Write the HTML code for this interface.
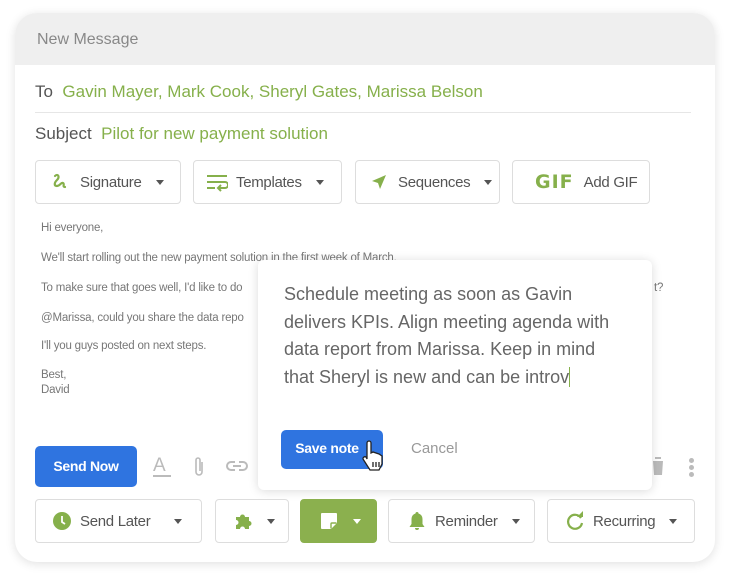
<!DOCTYPE html>
<html><head><meta charset="utf-8"><style>
*{margin:0;padding:0;box-sizing:border-box}
body{width:730px;height:578px;background:#fff;font-family:"Liberation Sans",sans-serif;position:relative;overflow:hidden}
.card{position:absolute;left:15px;top:13px;width:700px;height:549px;background:#fff;border-radius:22px;box-shadow:0 2px 10px rgba(0,0,0,.12);overflow:hidden}
.hdr{position:absolute;left:0;top:0;width:700px;height:52px;background:#efefef}
.a{position:absolute;white-space:nowrap}
.g{color:#86b04b}
.btn{position:absolute;border:1px solid #ddd;border-radius:4px;background:#fff;height:44px;display:flex;align-items:center;font-size:15px;color:#555;letter-spacing:-0.3px}
.car{display:inline-block;width:0;height:0;border-left:4.5px solid transparent;border-right:4.5px solid transparent;border-top:5px solid #555;margin-left:14px}
.body{font-size:11.5px;color:#777;letter-spacing:-0.2px}
.pop{position:absolute;left:258px;top:260px;width:394px;height:230px;background:#fff;border-radius:6px;box-shadow:0 1px 10px rgba(0,0,0,.15)}
</style></head><body>
<div class="card">
<div class="hdr"></div>
<div class="a" style="left:22px;top:18px;font-size:16px;color:#888">New Message</div>
<div class="a" style="left:20px;top:69px;font-size:17px;color:#555">To <span class="g">&nbsp;Gavin Mayer, Mark Cook, Sheryl Gates, Marissa Belson</span></div>
<div class="a" style="left:20px;top:99px;width:656px;height:1px;background:#e6e6e6"></div>
<div class="a" style="left:20px;top:111px;font-size:17px;color:#555">Subject <span class="g">&nbsp;Pilot for new payment solution</span></div>
</div>
<div class="btn" style="left:35px;top:160px;width:146px;padding-left:15px"><svg width="20" height="20" viewBox="0 0 20 20"><path d="M4 4c3-3 5 1 2 4s-3 6 0 6 4-4 6-3-1 4 2 4" fill="none" stroke="#86b04b" stroke-width="2.2" stroke-linecap="round"/></svg><span style="margin-left:9px">Signature</span><span class="car"></span></div>
<div class="btn" style="left:193px;top:160px;width:149px;padding-left:12px"><svg width="22" height="20" viewBox="0 0 22 20"><path d="M1 4h20M1 10h18a3 3 0 0 1 0 6h-6M1 16h8M15 13l-3 3 3 3" fill="none" stroke="#86b04b" stroke-width="2"/></svg><span style="margin-left:8px">Templates</span><span class="car"></span></div>
<div class="btn" style="left:355px;top:160px;width:145px;padding-left:14px"><svg width="18" height="18" viewBox="0 0 18 18"><path d="M16 2L2 8l6 2 2 6z" fill="#86b04b"/></svg><span style="margin-left:10px">Sequences</span><span class="car"></span></div>
<div class="btn" style="left:512px;top:160px;width:138px;padding-left:22px"><b style="color:#86b04b;font-size:19px;font-family:'DejaVu Sans',sans-serif;letter-spacing:1px">GIF</b><span style="margin-left:10px">Add GIF</span></div>
<div class="a body" style="left:41px;top:222px">Hi everyone,</div>
<div class="a body" style="left:41px;top:252px">We'll start rolling out the new payment solution in the first week of March.</div>
<div class="a body" style="left:41px;top:282px">To make sure that goes well, I'd like to do</div>
<div class="a body" style="left:654px;top:282px">t?</div>
<div class="a body" style="left:41px;top:312px">@Marissa, could you share the data repo</div>
<div class="a body" style="left:41px;top:340px">I'll you guys posted on next steps.</div>
<div class="a body" style="left:41px;top:368px;line-height:15px">Best,<br>David</div>
<div class="a" style="left:35px;top:446px;width:102px;height:41px;background:#2f74e0;border-radius:5px;color:#fff;font-size:14px;font-weight:bold;text-align:center;line-height:41px;letter-spacing:-0.3px">Send Now</div>
<div class="a" style="left:153px;top:455px;color:#bbb;font-size:19px">A</div>
<div class="a" style="left:153px;top:475px;width:18px;height:2px;background:#bbb"></div>
<svg class="a" style="left:192px;top:456px" width="14" height="22" viewBox="0 0 14 22"><path d="M10 6v10a3 3 0 0 1-6 0V4a2 2 0 0 1 4 0v11" fill="none" stroke="#bbb" stroke-width="1.6"/></svg>
<svg class="a" style="left:226px;top:459px" width="22" height="14" viewBox="0 0 22 14"><path d="M9 3H5a4 4 0 0 0 0 8h4M13 3h4a4 4 0 0 1 0 8h-4M7 7h8" fill="none" stroke="#bbb" stroke-width="2"/></svg>
<svg class="a" style="left:650px;top:456px" width="16" height="20" viewBox="0 0 16 20"><path d="M1 3h14M5 3V1h6v2M3 5h10l-1 14H4z" fill="#bbb"/></svg>
<div class="a" style="left:689px;top:458px;width:5px;height:5px;border-radius:3px;background:#bbb;box-shadow:0 7px 0 #bbb,0 14px 0 #bbb"></div>
<div class="pop">
<div class="a" style="left:26px;top:21px;font-size:18px;line-height:27.5px;color:#666;white-space:normal;width:338px">Schedule meeting as soon as Gavin delivers KPIs. Align meeting agenda with data report from Marissa. Keep in mind that Sheryl is new and can be introv<span style="border-left:1px solid #86b04b"></span></div>
<div class="a" style="left:23px;top:170px;width:102px;height:39px;background:#2f74e0;border-radius:5px;color:#fff;font-size:14px;font-weight:bold;text-align:center;line-height:37px;padding-right:10px;letter-spacing:-0.3px">Save note</div>
<div class="a" style="left:153px;top:180px;font-size:15px;color:#999">Cancel</div>
<svg class="a" style="left:103px;top:180px" width="26" height="32" viewBox="0 0 26 32"><path d="M6 3a2 2 0 0 1 4 0v10l2-1 3 1 3 1 3 2v8l-3 6H9L2 19a2 2 0 0 1 3-2l1 2z" fill="#fff" stroke="#222" stroke-width="1.3"/><path d="M12 22v5M15 22v5M18 22v5" stroke="#222" stroke-width="1.3"/></svg>
</div>
<div class="btn" style="left:35px;top:499px;width:167px;padding-left:17px"><svg width="18" height="18" viewBox="0 0 18 18"><circle cx="9" cy="9" r="9" fill="#86b04b"/><path d="M9 4v6l3 2" stroke="#fff" stroke-width="1.8" fill="none"/></svg><span style="margin-left:9px">Send Later</span><span class="car" style="margin-left:24px"></span></div>
<div class="btn" style="left:215px;top:499px;width:74px;padding-left:17px"><svg width="20" height="20" viewBox="0 0 20 20"><path d="M3 6h4a2.5 2.5 0 1 1 5 0h4v4a2.5 2.5 0 1 1 0 5v3h-4a2.5 2.5 0 1 0-5 0H3v-4a2.5 2.5 0 1 0 0-5z" fill="#86b04b"/></svg><span class="car"></span></div>
<div class="btn" style="left:300px;top:499px;width:77px;padding-left:19px;background:#8bb04e;border-color:#8bb04e"><svg width="18" height="18" viewBox="0 0 18 18"><path d="M2 1h14a1 1 0 0 1 1 1v9l-6 6H2a1 1 0 0 1-1-1V2a1 1 0 0 1 1-1z" fill="#fff"/><path d="M11 16.5V12a1 1 0 0 1 1-1h4.5" fill="none" stroke="#8bb04e" stroke-width="1.4"/></svg><span class="car" style="border-top-color:#fff;margin-left:15px"></span></div>
<div class="btn" style="left:388px;top:499px;width:147px;padding-left:19px"><svg width="18" height="20" viewBox="0 0 18 20"><path d="M9 1a1.5 1.5 0 0 1 1.5 1.5A5.5 5.5 0 0 1 14.5 8v5l2 3h-15l2-3V8a5.5 5.5 0 0 1 4-5.5A1.5 1.5 0 0 1 9 1zM7 17h4a2 2 0 0 1-4 0z" fill="#86b04b"/></svg><span style="margin-left:9px">Reminder</span><span class="car"></span></div>
<div class="btn" style="left:547px;top:499px;width:148px;padding-left:17px"><svg width="20" height="20" viewBox="0 0 20 20"><path d="M16 7A7 7 0 1 0 17 12" fill="none" stroke="#86b04b" stroke-width="2.2"/><path d="M12 6h6V0z" fill="#86b04b"/></svg><span style="margin-left:8px">Recurring</span><span class="car"></span></div>
</body></html>
